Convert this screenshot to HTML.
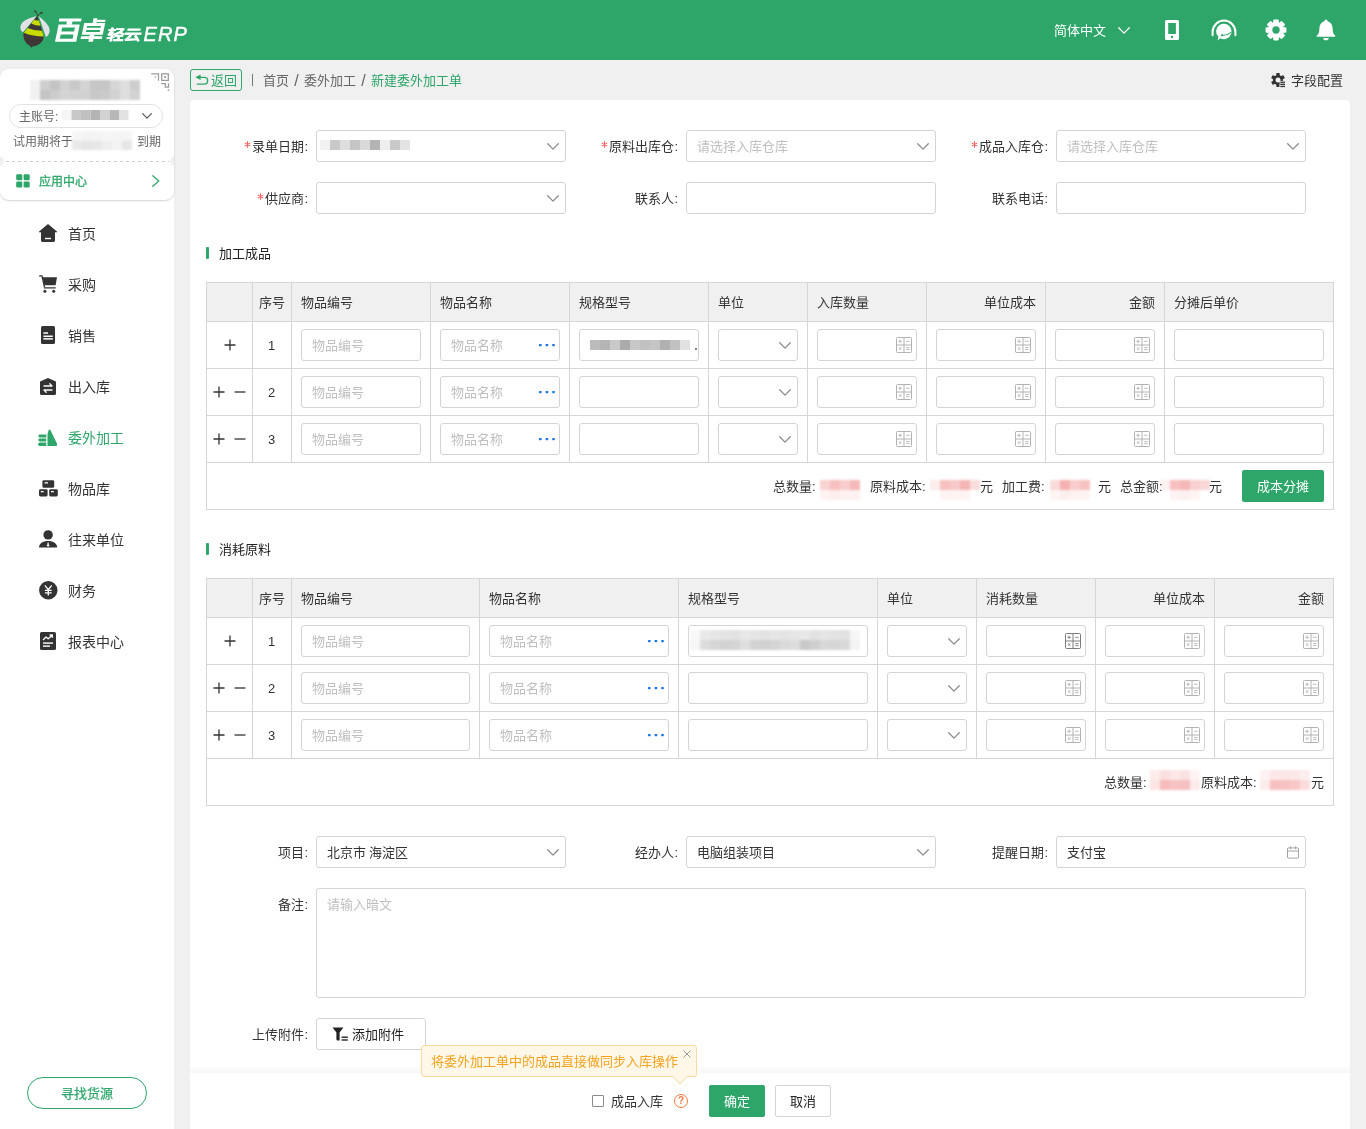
<!DOCTYPE html>
<html lang="zh-CN">
<head>
<meta charset="utf-8">
<title>新建委外加工单</title>
<style>
*{box-sizing:border-box;margin:0;padding:0}
html,body{width:1366px;height:1129px;overflow:hidden}
body{position:relative;will-change:transform;background:#f0f0f0;font-family:"Liberation Sans",sans-serif;font-size:13px;color:#333;line-height:1}
.abs{position:absolute}
svg{display:block;position:absolute;overflow:visible}
/* header */
#hdr{position:absolute;left:0;top:0;width:1366px;height:60px;background:#2ea66a}
#hdr .lang{position:absolute;left:1054px;top:22px;font-size:13px;line-height:18px;color:#fff}
/* sidebar */
#side{position:absolute;left:0;top:69px;width:174px;height:1060px;background:#fff;border-radius:10px 10px 0 0}
#card{position:absolute;left:0;top:0;width:174px;height:131px;overflow:hidden;border-radius:9px;background:#fff;box-shadow:0 1px 2px rgba(0,0,0,.18)}
.notch{position:absolute;width:10px;height:10px;border-radius:50%;background:#f1f1f1;top:87px}
.dash{position:absolute;left:6px;top:92px;width:163px;height:1px;background:repeating-linear-gradient(to right,#cfcfcf 0,#cfcfcf 3px,transparent 3px,transparent 6px)}
.pill{position:absolute;left:9px;top:35px;width:154px;height:24px;border:1px solid #e2e2e2;border-radius:12px;background:#fff}
.pill span{position:absolute;left:9px;top:4px;font-size:12px;line-height:16px;color:#666}
.trial{position:absolute;top:65px;font-size:12px;line-height:16px;color:#666}
.app{position:absolute;left:39px;top:105px;font-size:12px;line-height:16px;color:#2ea66a;-webkit-text-stroke:.3px #2ea66a}
.mi{position:absolute;left:68px;font-size:14px;line-height:20px;color:#333}
.mi.on{color:#2ea66a}
.find{position:absolute;left:27px;top:1008px;width:120px;height:32px;-webkit-text-stroke:.25px #2ea66a;border:1px solid #2ea66a;border-radius:16px;color:#2ea66a;font-size:13px;line-height:32px;text-align:center;background:#fff}

/* main */
#panel{position:absolute;left:190px;top:100px;width:1160px;height:1029px;background:#fff;border-radius:4px 4px 0 0}
.back{position:absolute;left:190px;top:69px;width:52px;height:22px;border:1px solid #2ea66a;border-radius:3px;color:#2ea66a;font-size:13px;line-height:22px;padding-left:20px}
.bc{position:absolute;top:71px;font-size:13px;line-height:18px;color:#666;white-space:nowrap}
.cfg{position:absolute;left:1291px;top:72px;font-size:13px;line-height:18px;color:#333}
.lbl{position:absolute;margin-top:1px;width:102px;text-align:right;font-size:13px;line-height:18px;color:#333;white-space:nowrap}
.lbl svg{position:relative;display:inline-block;vertical-align:top;margin:3px 1px 0 0}
.bc b{font-weight:normal;font-size:16px;padding:0 5.3px;position:relative;top:0.5px}
.inp{position:absolute;height:32px;border:1px solid #d4d4d4;border-radius:3px;background:#fff;font-size:13px;line-height:32px;padding-left:9.5px;color:#333;white-space:nowrap;overflow:hidden}
.ph{color:#bfbfbf}
.sec{position:absolute;margin-top:1px;left:219px;font-size:13px;line-height:18px;color:#222;font-weight:500}
.sec:before{content:"";position:absolute;left:-13px;top:2px;width:3px;height:12px;background:#2ea66a;border-radius:1px}
/* tables */
.tb{position:absolute;left:206px;width:1128px;border:1px solid #d6d6d6;background:#fff}
.tb .h{position:absolute;left:0;top:0;width:1126px;height:38px;background:#f0f0f0;border-bottom:1px solid #d6d6d6}
.vl{position:absolute;top:0;width:1px;height:180px;background:#d6d6d6}
.hl{position:absolute;left:0;width:1126px;height:1px;background:#d6d6d6}
.th{position:absolute;margin-top:1px;font-size:13px;line-height:18px;color:#333;font-weight:500;white-space:nowrap}
.num{position:absolute;margin-top:1px;width:39px;text-align:center;font-size:13px;line-height:18px;color:#333}
.ft{position:absolute;margin-top:1px;font-size:13px;line-height:18px;color:#333;white-space:nowrap}
.btn-g{position:absolute;background:#2ea66a;color:#fff;font-size:13px;border-radius:2px;text-align:center}
.btn-w{position:absolute;background:#fff;color:#222;font-size:13px;border:1px solid #d4d4d4;border-radius:2px;text-align:center}

.lg2{position:absolute;left:105px;top:21px;font-size:17.5px;line-height:24px;font-weight:700;color:#fff;-webkit-text-stroke:.35px #fff;transform-origin:0 100%;transform:skewX(-12deg) scaleY(.82);white-space:nowrap}
.lg3{position:absolute;left:143.5px;top:22px;font-size:20px;line-height:24px;font-style:italic;color:#fff;-webkit-text-stroke:.4px #fff;letter-spacing:1.1px;white-space:nowrap}
</style>
</head>
<body>
<!-- ================= HEADER ================= -->
<div id="hdr">
  <!-- bee logo -->
  <svg style="left:18px;top:8px" width="34" height="42" viewBox="18 8 34 42">
    <path d="M36.9 15.9C30 17.4 23.2 20.4 21.3 24C19.7 27 20.3 30.6 22.9 32.3Z" fill="#e2e1e3"/>
    <path d="M38.7 16.1C43 19.8 48.4 24.4 49.4 28.5C50.2 32 48.6 35.9 45.9 37.1Z" fill="#e2e1e3"/>
    <path d="M37.4 15.6L23.6 33C22.8 37.5 24.6 43.2 30.3 46.1L31.1 47.9L32.5 46.4C38.6 45.9 43.1 42.6 43.9 36.6Z" fill="#3e3736"/>
    <path d="M34.07 19.8Q36.5 20.7 38.8 20.2L40.5 25.8Q35.5 25.6 31.2 23.4Z" fill="#c7db00"/>
    <path d="M27.57 28Q34.5 31 42.05 30.8L43.8 36.6Q33 36.5 23.76 32.8Z" fill="#c7db00"/>
    <path d="M37.7 15.6C37.5 14 36.9 12.9 35.9 12" stroke="#3e3736" stroke-width=".9" fill="none" stroke-linecap="round"/>
    <path d="M38.4 15.4C38.8 14.2 39.6 13.5 40.6 13.1" stroke="#3e3736" stroke-width=".9" fill="none" stroke-linecap="round"/>
    <ellipse cx="35.4" cy="11.4" rx="1.35" ry=".85" transform="rotate(42 35.4 11.4)" fill="#3e3736"/>
    <ellipse cx="41.6" cy="12.8" rx="1.45" ry=".85" transform="rotate(-12 41.6 12.8)" fill="#3e3736"/>
  </svg>
  <svg style="left:50px;top:14px" width="60" height="30" viewBox="0 0 60 30"><g transform="matrix(1 0 -0.207 1 5.755 0)" fill="#fff">
    <rect x="4.5" y="4.5" width="22.3" height="2.9"/><rect x="12.7" y="7" width="5.6" height="3.8"/>
    <path fill-rule="evenodd" d="M5 10.4H26.2V27.8H5ZM9.2 13.4V17.6H22V13.4ZM9.2 20.6V24.8H22V20.6Z"/>
    <rect x="38.7" y="4.2" width="3.8" height="5.2"/><rect x="42.3" y="5.8" width="8.7" height="2.2"/>
    <path fill-rule="evenodd" d="M30.3 9.1H51.3V20.8H30.3ZM33.9 12.1V13.8H47.7V12.1ZM33.9 16.1V18H47.7V16.1Z"/>
    <rect x="38.3" y="20.5" width="4.7" height="7.3"/><rect x="30" y="22.3" width="21.2" height="2.7"/>
  </g></svg><div class="lg2">轻云</div><div class="lg3">ERP</div>
  <div class="lang">简体中文</div>
  <svg style="left:1118px;top:27px" width="12" height="7" viewBox="0 0 12 7"><path d="M0.7 0.7L6 6.1L11.3 0.7" fill="none" stroke="#fff" stroke-width="1.3" stroke-linecap="round" stroke-linejoin="round"/></svg>
  <!-- phone -->
  <svg style="left:1165px;top:20px" width="14" height="20" viewBox="0 0 14 20"><path fill-rule="evenodd" fill="#fff" d="M1.6 0H12.4A1.6 1.6 0 0 1 14 1.6V18.4A1.6 1.6 0 0 1 12.4 20H1.6A1.6 1.6 0 0 1 0 18.4V1.6A1.6 1.6 0 0 1 1.6 0ZM3.2 3.1V14.1H10.9V3.1ZM7 15.8A1.25 1.25 0 1 0 7 18.3A1.25 1.25 0 1 0 7 15.8Z"/></svg>
  <!-- headset -->
  <svg style="left:1211px;top:19px" width="26" height="23" viewBox="0 0 26 23">
    <path d="M1.6 16.2 V13 A11.4 11.4 0 0 1 24.4 13 V16.2" fill="none" stroke="#fff" stroke-width="2" stroke-linecap="round"/>
    <path d="M13.1 4.7 A7.7 7.7 0 1 1 9.2 19.2 L6.6 21.6 L7.4 17.7 A7.7 7.7 0 0 1 13.1 4.7Z" fill="#fff"/>
    <path d="M10.6 16.2 C13.5 16.6 17 15.6 19.6 13.6" fill="none" stroke="#2ea66a" stroke-width="1.1" stroke-linecap="round"/>
    <circle cx="11" cy="16.3" r="1.1" fill="#2ea66a"/>
  </svg>
  <!-- gear -->
  <svg style="left:1265px;top:19px" width="22" height="22" viewBox="-11 -11 22 22"><g fill="#fff">
    <circle r="8"/>
    <rect x="-2.8" y="-10.4" width="5.6" height="4.6" rx="1.1" transform="rotate(0)"/><rect x="-2.8" y="-10.4" width="5.6" height="4.6" rx="1.1" transform="rotate(45)"/><rect x="-2.8" y="-10.4" width="5.6" height="4.6" rx="1.1" transform="rotate(90)"/><rect x="-2.8" y="-10.4" width="5.6" height="4.6" rx="1.1" transform="rotate(135)"/><rect x="-2.8" y="-10.4" width="5.6" height="4.6" rx="1.1" transform="rotate(180)"/><rect x="-2.8" y="-10.4" width="5.6" height="4.6" rx="1.1" transform="rotate(225)"/><rect x="-2.8" y="-10.4" width="5.6" height="4.6" rx="1.1" transform="rotate(270)"/><rect x="-2.8" y="-10.4" width="5.6" height="4.6" rx="1.1" transform="rotate(315)"/></g>
    <circle r="3.7" fill="#2ea66a"/>
  </svg>
  <!-- bell -->
  <svg style="left:1316px;top:19px" width="20" height="22" viewBox="0 0 20 22"><path fill="#fff" d="M10 0.6 A1.6 1.6 0 0 1 11.6 2.2 C15 3.2 16.6 6 16.6 9.6 C16.6 13.6 17.6 15.4 19.2 16.6 V17.8 H0.8 V16.6 C2.4 15.4 3.4 13.6 3.4 9.6 C3.4 6 5 3.2 8.4 2.2 A1.6 1.6 0 0 1 10 0.6Z M7.3 18.9 H12.7 A2.7 2.4 0 0 1 7.3 18.9Z"/></svg>
</div>
<!-- ================= SIDEBAR ================= -->
<div id="side">
  <div id="card">
    <div class="notch" style="left:-6px"></div><div class="notch" style="left:170px"></div>
    <div class="dash"></div>
    <svg style="left:30px;top:11px;filter:blur(0.9px)" width="110" height="20" viewBox="0 0 110 20"><rect x="0" y="0" width="10" height="10" fill="#f1f1f1"/><rect x="10" y="0" width="10" height="10" fill="#cfcfcf"/><rect x="20" y="0" width="10" height="10" fill="#c4c4c4"/><rect x="30" y="0" width="10" height="10" fill="#d2d2d2"/><rect x="40" y="0" width="10" height="10" fill="#c8c8c8"/><rect x="50" y="0" width="10" height="10" fill="#d4d4d4"/><rect x="60" y="0" width="10" height="10" fill="#c6c6c6"/><rect x="70" y="0" width="10" height="10" fill="#c6c6c6"/><rect x="80" y="0" width="10" height="10" fill="#d6d6d6"/><rect x="90" y="0" width="10" height="10" fill="#dedede"/><rect x="100" y="0" width="10" height="10" fill="#cdcdcd"/><rect x="0" y="10" width="10" height="10" fill="#f1f1f1"/><rect x="10" y="10" width="10" height="10" fill="#c4c4c4"/><rect x="20" y="10" width="10" height="10" fill="#cccccc"/><rect x="30" y="10" width="10" height="10" fill="#d4d4d4"/><rect x="40" y="10" width="10" height="10" fill="#d2d2d2"/><rect x="50" y="10" width="10" height="10" fill="#d2d2d2"/><rect x="60" y="10" width="10" height="10" fill="#c8c8c8"/><rect x="70" y="10" width="10" height="10" fill="#cacaca"/><rect x="80" y="10" width="10" height="10" fill="#d2d2d2"/><rect x="90" y="10" width="10" height="10" fill="#dedede"/><rect x="100" y="10" width="10" height="10" fill="#d2d2d2"/></svg>
    <svg style="left:151px;top:4px" width="19" height="19" viewBox="0 0 19 19" fill="none" stroke="#9b9b9b" stroke-width="1.25"><path d="M0.2 0.8H7.5V7.7"/><rect x="3.5" y="3.2" width="1.6" height="1.6" fill="#b5b5b5" stroke="none"/><rect x="10.7" y="0.8" width="6.6" height="6.6"/><rect x="13.1" y="3.2" width="1.8" height="1.8" fill="#9b9b9b" stroke="none"/><path d="M10.2 10.5H14.3V14H17.5V10.2"/><rect x="16.7" y="16.4" width="1.5" height="1.5" fill="#9b9b9b" stroke="none"/></svg>
    <div class="pill"><span>主账号:</span></div>
    <svg style="left:62px;top:41px;filter:blur(0.5px)" width="66.5" height="10" viewBox="0 0 66.5 10"><rect x="0.0" y="0" width="9.5" height="10" fill="#f5f5f5"/><rect x="9.5" y="0" width="9.5" height="10" fill="#c8c8c8"/><rect x="19.0" y="0" width="9.5" height="10" fill="#c0c0c0"/><rect x="28.5" y="0" width="9.5" height="10" fill="#b4b4b4"/><rect x="38.0" y="0" width="9.5" height="10" fill="#d2d2d2"/><rect x="47.5" y="0" width="9.5" height="10" fill="#b8b8b8"/><rect x="57.0" y="0" width="9.5" height="10" fill="#e2e2e2"/></svg>
    <svg style="left:142px;top:44px" width="10" height="6" viewBox="0 0 10 6"><path d="M0.6 0.6L5 5.2L9.4 0.6" fill="none" stroke="#555" stroke-width="1.2" stroke-linecap="round" stroke-linejoin="round"/></svg>
    <div class="trial" style="left:13px">试用期将于</div>
    <div class="trial" style="left:137px">到期</div>
    <svg style="left:72px;top:62px;filter:blur(1px)" width="60" height="19.0" viewBox="0 0 60 19.0"><rect x="0" y="0.0" width="10" height="9.5" fill="#f6f6f6"/><rect x="10" y="0.0" width="10" height="9.5" fill="#f3f3f3"/><rect x="20" y="0.0" width="10" height="9.5" fill="#f4f4f4"/><rect x="30" y="0.0" width="10" height="9.5" fill="#f6f6f6"/><rect x="40" y="0.0" width="10" height="9.5" fill="#f4f4f4"/><rect x="50" y="0.0" width="10" height="9.5" fill="#f5f5f5"/><rect x="0" y="9.5" width="10" height="9.5" fill="#e9e9e9"/><rect x="10" y="9.5" width="10" height="9.5" fill="#e5e5e5"/><rect x="20" y="9.5" width="10" height="9.5" fill="#e7e7e7"/><rect x="30" y="9.5" width="10" height="9.5" fill="#efefef"/><rect x="40" y="9.5" width="10" height="9.5" fill="#f3f3f3"/><rect x="50" y="9.5" width="10" height="9.5" fill="#e6e6e6"/></svg>
    <svg style="left:16px;top:105px" width="14" height="14" viewBox="0 0 14 14" fill="#2ea66a"><rect x="0.2" y="0.2" width="6.1" height="6.1" rx="1.3"/><rect x="7.6" y="0.2" width="6.1" height="6.1" rx="1.3"/><rect x="0.2" y="7.5" width="6.1" height="6.1" rx="1.3"/><rect x="7.6" y="7.5" width="6.1" height="6.1" rx="1.3"/></svg>
    <div class="app">应用中心</div>
    <svg style="left:152px;top:106px" width="8" height="12" viewBox="0 0 8 12"><path d="M0.8 0.7L6.8 6L0.8 11.3" fill="none" stroke="#2ea66a" stroke-width="1.3" stroke-linecap="round" stroke-linejoin="round"/></svg>
  </div>
  <!-- menu icons -->
  <svg style="left:39px;top:155px" width="18" height="18" viewBox="0 0 18 18"><path fill="#333" d="M9 0L18 7.6V8.2H16V16.6A1.4 1.4 0 0 1 14.6 18H3.4A1.4 1.4 0 0 1 2 16.6V8.2H0V7.6Z"/><rect x="6" y="13.8" width="6" height="1.4" fill="#fff"/></svg>
  <svg style="left:39px;top:206px" width="18" height="18" viewBox="0 0 18 18"><path fill="none" stroke="#333" stroke-width="1.4" stroke-linecap="round" stroke-linejoin="round" d="M0.7 0.9H3L5.4 11.6"/><path fill="#333" d="M3.6 2.2H18L16.6 10.2H5.4Z"/><path fill="none" stroke="#333" stroke-width="1.4" stroke-linecap="round" d="M5.4 12.9H16.2"/><circle cx="5.9" cy="16.3" r="1.5" fill="#333"/><circle cx="14.7" cy="16.3" r="1.5" fill="#333"/></svg>
  <svg style="left:41px;top:257px" width="14" height="18" viewBox="0 0 14 18"><rect width="14" height="18" rx="1.6" fill="#333"/><rect x="2.4" y="6.3" width="4.6" height="1.5" fill="#fff"/><rect x="2.4" y="9.5" width="9.4" height="1.5" fill="#fff"/><rect x="2.4" y="12.1" width="9.4" height="1.5" fill="#fff"/></svg>
  <svg style="left:40px;top:309px" width="16" height="17" viewBox="0 0 16 17"><path fill="#333" d="M8 0L15.4 3.2A1 1 0 0 1 16 4.1V15.4A1.6 1.6 0 0 1 14.4 17H1.6A1.6 1.6 0 0 1 0 15.4V4.1A1 1 0 0 1 0.6 3.2Z"/><path fill="none" stroke="#fff" stroke-width="1.3" stroke-linejoin="round" stroke-linecap="round" d="M4 8H12L9.8 5.8M12 12H4L6.2 14.2"/></svg>
  <svg style="left:38px;top:360px" width="20" height="18" viewBox="0 0 20 18"><path fill="#2ea66a" d="M1.8 5.6H8.3V8.4H1.8A1.4 1.4 0 0 1 1.8 5.6ZM1.8 9.5H8.3V12.4H1.8A1.4 1.4 0 0 1 1.8 9.5ZM1.8 13.5H8.3V17H1.8A1.75 1.75 0 0 1 1.8 13.5Z"/><path fill="#2ea66a" d="M9.5 17V5L10.6 1.2C10.9 0.3 11.9 0.3 12.4 1.1L18.9 14.4C19.6 15.8 18.9 17 17.4 17Z"/></svg>
  <svg style="left:39px;top:411px" width="19" height="17" viewBox="0 0 19 17"><rect x="3.4" y="0.2" width="11.8" height="7.6" rx="1.4" fill="#333"/><rect x="0" y="9.2" width="8.6" height="7.2" rx="1.4" fill="#333"/><rect x="10.2" y="9.2" width="8.6" height="7.2" rx="1.4" fill="#333"/><rect x="5.6" y="2.2" width="3.4" height="1.3" fill="#fff"/><rect x="1.8" y="11" width="2.8" height="1.3" fill="#fff"/><rect x="12" y="11" width="2.8" height="1.3" fill="#fff"/></svg>
  <svg style="left:39px;top:461px" width="18" height="18" viewBox="0 0 18 18"><circle cx="9.1" cy="4.9" r="4.7" fill="#333"/><path fill="#333" d="M0 17.6C0.2 13.4 3.6 11 9.1 11C14.6 11 18 13.4 18.2 17.6Z"/><path fill="#fff" d="M8.4 12.4H9.8L9.6 14.2L10.6 15.6L9.1 16.8L7.6 15.6L8.6 14.2Z"/></svg>
  <svg style="left:39px;top:512px" width="19" height="19" viewBox="0 0 19 19"><circle cx="9.3" cy="9.2" r="9.2" fill="#333"/><path fill="none" stroke="#fff" stroke-width="1.3" d="M5.9 4.4L9.3 8.6L12.7 4.4M9.3 8.6V14.4M5.9 9.3H12.7M5.9 11.8H12.7"/></svg>
  <svg style="left:40px;top:563px" width="16" height="18" viewBox="0 0 16 18"><rect width="16" height="18" rx="1.6" fill="#333"/><path fill="none" stroke="#fff" stroke-width="1.3" stroke-linejoin="round" d="M3 8L6 5L8.2 6.8L12.2 3.2M9.6 3H12.4V5.8"/><rect x="3" y="10.4" width="10" height="1.4" fill="#fff"/><rect x="3" y="13.4" width="7" height="1.4" fill="#fff"/></svg>
  <div class="mi" style="top:155px">首页</div>
  <div class="mi" style="top:206px">采购</div>
  <div class="mi" style="top:257px">销售</div>
  <div class="mi" style="top:308px">出入库</div>
  <div class="mi on" style="top:359px">委外加工</div>
  <div class="mi" style="top:410px">物品库</div>
  <div class="mi" style="top:461px">往来单位</div>
  <div class="mi" style="top:512px">财务</div>
  <div class="mi" style="top:563px">报表中心</div>
  <div class="find">寻找货源</div>
</div>
<!-- ================= MAIN ================= -->
<div id="panel"></div>
<div class="back">返回</div>
<svg style="left:195px;top:74px" width="14" height="12" viewBox="0 0 14 12"><path d="M5.6 0.6L0.3 3.3L5.6 6Z" fill="#2ea66a"/><path d="M4.6 3.4H9.3A3.35 3.35 0 0 1 9.3 10.1H2.2" fill="none" stroke="#2ea66a" stroke-width="1.35" stroke-linecap="round"/></svg>
<div class="abs" style="left:252px;top:74px;width:1px;height:12px;background:#777"></div>
<div class="bc" style="left:263px">首页<b>/</b>委外加工<b>/</b><span style="color:#2ea66a">新建委外加工单</span></div>
<svg style="left:1271px;top:73px" width="14" height="14" viewBox="-7 -7 14 14"><g fill="#333"><circle r="5.1"/><rect x="-1.7" y="-7" width="3.4" height="3.4" rx=".5" transform="rotate(0)"/><rect x="-1.7" y="-7" width="3.4" height="3.4" rx=".5" transform="rotate(60)"/><rect x="-1.7" y="-7" width="3.4" height="3.4" rx=".5" transform="rotate(120)"/><rect x="-1.7" y="-7" width="3.4" height="3.4" rx=".5" transform="rotate(180)"/><rect x="-1.7" y="-7" width="3.4" height="3.4" rx=".5" transform="rotate(240)"/><rect x="-1.7" y="-7" width="3.4" height="3.4" rx=".5" transform="rotate(300)"/></g><circle r="2.5" fill="#f0f0f0"/><rect x="1.6" y="0.9" width="6" height="6.4" fill="#f0f0f0"/><g fill="#333"><rect x="2.3" y="1.6" width="4.7" height="1.3"/><rect x="2.3" y="3.7" width="4.7" height="1.3"/><rect x="2.3" y="5.8" width="4.7" height="1.3"/></g></svg>
<div class="cfg">字段配置</div>
<div class="lbl" style="left:206px;top:137px"><svg width="7" height="7" viewBox="0 0 7 7"><path d="M3.5 0.3V6.7M0.7 1.9L6.3 5.1M6.3 1.9L0.7 5.1" stroke="#ff5c5c" stroke-width="1.05" fill="none"/></svg>录单日期:</div>
<div class="inp" style="left:316px;top:130px;width:250px;height:32px"></div>
<svg style="left:547px;top:143px" width="12" height="7" viewBox="0 0 12 7"><path d="M0.7 0.7 L6.0 6.1 L11.3 0.7" fill="none" stroke="#8c8c8c" stroke-width="1.3" stroke-linecap="round" stroke-linejoin="round"/></svg>
<div class="lbl" style="left:576px;top:137px"><svg width="7" height="7" viewBox="0 0 7 7"><path d="M3.5 0.3V6.7M0.7 1.9L6.3 5.1M6.3 1.9L0.7 5.1" stroke="#ff5c5c" stroke-width="1.05" fill="none"/></svg>原料出库仓:</div>
<div class="inp ph" style="left:686px;top:130px;width:250px;height:32px">请选择入库仓库</div>
<svg style="left:917px;top:143px" width="12" height="7" viewBox="0 0 12 7"><path d="M0.7 0.7 L6.0 6.1 L11.3 0.7" fill="none" stroke="#8c8c8c" stroke-width="1.3" stroke-linecap="round" stroke-linejoin="round"/></svg>
<div class="lbl" style="left:946px;top:137px"><svg width="7" height="7" viewBox="0 0 7 7"><path d="M3.5 0.3V6.7M0.7 1.9L6.3 5.1M6.3 1.9L0.7 5.1" stroke="#ff5c5c" stroke-width="1.05" fill="none"/></svg>成品入库仓:</div>
<div class="inp ph" style="left:1056px;top:130px;width:250px;height:32px">请选择入库仓库</div>
<svg style="left:1287px;top:143px" width="12" height="7" viewBox="0 0 12 7"><path d="M0.7 0.7 L6.0 6.1 L11.3 0.7" fill="none" stroke="#8c8c8c" stroke-width="1.3" stroke-linecap="round" stroke-linejoin="round"/></svg>
<div class="lbl" style="left:206px;top:189px"><svg width="7" height="7" viewBox="0 0 7 7"><path d="M3.5 0.3V6.7M0.7 1.9L6.3 5.1M6.3 1.9L0.7 5.1" stroke="#ff5c5c" stroke-width="1.05" fill="none"/></svg>供应商:</div>
<div class="inp" style="left:316px;top:182px;width:250px;height:32px"></div>
<svg style="left:547px;top:195px" width="12" height="7" viewBox="0 0 12 7"><path d="M0.7 0.7 L6.0 6.1 L11.3 0.7" fill="none" stroke="#8c8c8c" stroke-width="1.3" stroke-linecap="round" stroke-linejoin="round"/></svg>
<div class="lbl" style="left:576px;top:189px">联系人:</div>
<div class="inp" style="left:686px;top:182px;width:250px;height:32px"></div>
<div class="lbl" style="left:946px;top:189px">联系电话:</div>
<div class="inp" style="left:1056px;top:182px;width:250px;height:32px"></div>
<svg style="left:320px;top:140px;filter:blur(0.6px)" width="90" height="10" viewBox="0 0 90 10"><rect x="0" y="0" width="10" height="10" fill="#f1f1f1"/><rect x="10" y="0" width="10" height="10" fill="#c9c9c9"/><rect x="20" y="0" width="10" height="10" fill="#dedede"/><rect x="30" y="0" width="10" height="10" fill="#c5c5c5"/><rect x="40" y="0" width="10" height="10" fill="#d9d9d9"/><rect x="50" y="0" width="10" height="10" fill="#b4b4b4"/><rect x="60" y="0" width="10" height="10" fill="#eeeeee"/><rect x="70" y="0" width="10" height="10" fill="#c9c9c9"/><rect x="80" y="0" width="10" height="10" fill="#e3e3e3"/></svg>
<div class="sec" style="top:244px">加工成品</div>
<div class="abs" style="left:206px;top:282px;width:1128px;height:228px;background:#fff;border:1px solid #d6d6d6"></div>
<div class="abs" style="left:207px;top:283px;width:1126px;height:38px;background:#f0f0f0"></div>
<div class="abs" style="left:206px;top:321px;width:1128px;height:1px;background:#d6d6d6"></div>
<div class="abs" style="left:206px;top:368px;width:1128px;height:1px;background:#d6d6d6"></div>
<div class="abs" style="left:206px;top:415px;width:1128px;height:1px;background:#d6d6d6"></div>
<div class="abs" style="left:206px;top:462px;width:1128px;height:1px;background:#d6d6d6"></div>
<div class="abs" style="left:252px;top:282px;width:1px;height:180px;background:#d6d6d6"></div>
<div class="abs" style="left:291px;top:282px;width:1px;height:180px;background:#d6d6d6"></div>
<div class="abs" style="left:430px;top:282px;width:1px;height:180px;background:#d6d6d6"></div>
<div class="abs" style="left:569px;top:282px;width:1px;height:180px;background:#d6d6d6"></div>
<div class="abs" style="left:708px;top:282px;width:1px;height:180px;background:#d6d6d6"></div>
<div class="abs" style="left:807px;top:282px;width:1px;height:180px;background:#d6d6d6"></div>
<div class="abs" style="left:926px;top:282px;width:1px;height:180px;background:#d6d6d6"></div>
<div class="abs" style="left:1045px;top:282px;width:1px;height:180px;background:#d6d6d6"></div>
<div class="abs" style="left:1164px;top:282px;width:1px;height:180px;background:#d6d6d6"></div>
<div class="th" style="top:293px;left:253px;width:38px;text-align:center">序号</div>
<div class="th" style="top:293px;left:301px">物品编号</div>
<div class="th" style="top:293px;left:440px">物品名称</div>
<div class="th" style="top:293px;left:579px">规格型号</div>
<div class="th" style="top:293px;left:718px">单位</div>
<div class="th" style="top:293px;left:817px">入库数量</div>
<div class="th" style="top:293px;left:927px;width:109px;text-align:right">单位成本</div>
<div class="th" style="top:293px;left:1046px;width:109px;text-align:right">金额</div>
<div class="th" style="top:293px;left:1174px">分摊后单价</div>
<svg style="left:224px;top:338.5px" width="12" height="12" viewBox="0 0 12 12"><path d="M6 0.5V11.5M0.5 6H11.5" stroke="#333" stroke-width="1.3" fill="none"/></svg>
<div class="num" style="left:252px;top:336px">1</div>
<div class="inp ph" style="left:301px;top:329px;width:120px;height:32px">物品编号</div>
<div class="inp ph" style="left:440px;top:329px;width:120px;height:32px">物品名称</div>
<svg style="left:539px;top:342.5px" width="17" height="4" viewBox="0 0 17 4" fill="#1a73e8"><rect x="0" y="1" width="2.6" height="2.2" rx=".6"/><rect x="6.6" y="1" width="2.6" height="2.2" rx=".6"/><rect x="13.2" y="1" width="2.6" height="2.2" rx=".6"/></svg>
<div class="inp" style="left:579px;top:329px;width:120px;height:32px"></div>
<div class="inp" style="left:718px;top:329px;width:80px;height:32px"></div>
<svg style="left:779px;top:342px" width="12" height="7" viewBox="0 0 12 7"><path d="M0.7 0.7 L6.0 6.1 L11.3 0.7" fill="none" stroke="#8c8c8c" stroke-width="1.3" stroke-linecap="round" stroke-linejoin="round"/></svg>
<div class="inp" style="left:817px;top:329px;width:100px;height:32px"></div>
<svg style="left:896px;top:337px" width="16" height="16" viewBox="0 0 16 16" fill="none" stroke="#b2b2b2" stroke-width="1"><rect x="0.5" y="0.5" width="15" height="15" rx="1"/><path d="M8 0.5V15.5M0.5 8H15.5"/><path d="M2.4 4.3H5.8M4.1 2.6V6M10.2 4.3H13.6M2.9 10.3L5.5 12.9M5.5 10.3L2.9 12.9M10.2 10.6H13.6M10.2 12.6H13.6" stroke-width="0.9"/></svg>
<div class="inp" style="left:936px;top:329px;width:100px;height:32px"></div>
<svg style="left:1015px;top:337px" width="16" height="16" viewBox="0 0 16 16" fill="none" stroke="#b2b2b2" stroke-width="1"><rect x="0.5" y="0.5" width="15" height="15" rx="1"/><path d="M8 0.5V15.5M0.5 8H15.5"/><path d="M2.4 4.3H5.8M4.1 2.6V6M10.2 4.3H13.6M2.9 10.3L5.5 12.9M5.5 10.3L2.9 12.9M10.2 10.6H13.6M10.2 12.6H13.6" stroke-width="0.9"/></svg>
<div class="inp" style="left:1055px;top:329px;width:100px;height:32px"></div>
<svg style="left:1134px;top:337px" width="16" height="16" viewBox="0 0 16 16" fill="none" stroke="#b2b2b2" stroke-width="1"><rect x="0.5" y="0.5" width="15" height="15" rx="1"/><path d="M8 0.5V15.5M0.5 8H15.5"/><path d="M2.4 4.3H5.8M4.1 2.6V6M10.2 4.3H13.6M2.9 10.3L5.5 12.9M5.5 10.3L2.9 12.9M10.2 10.6H13.6M10.2 12.6H13.6" stroke-width="0.9"/></svg>
<div class="inp" style="left:1174px;top:329px;width:150px;height:32px"></div>
<svg style="left:213px;top:385.5px" width="12" height="12" viewBox="0 0 12 12"><path d="M6 0.5V11.5M0.5 6H11.5" stroke="#333" stroke-width="1.3" fill="none"/></svg>
<svg style="left:234px;top:385.5px" width="12" height="12" viewBox="0 0 12 12"><path d="M0.5 6H11.5" stroke="#333" stroke-width="1.3" fill="none"/></svg>
<div class="num" style="left:252px;top:383px">2</div>
<div class="inp ph" style="left:301px;top:376px;width:120px;height:32px">物品编号</div>
<div class="inp ph" style="left:440px;top:376px;width:120px;height:32px">物品名称</div>
<svg style="left:539px;top:389.5px" width="17" height="4" viewBox="0 0 17 4" fill="#1a73e8"><rect x="0" y="1" width="2.6" height="2.2" rx=".6"/><rect x="6.6" y="1" width="2.6" height="2.2" rx=".6"/><rect x="13.2" y="1" width="2.6" height="2.2" rx=".6"/></svg>
<div class="inp" style="left:579px;top:376px;width:120px;height:32px"></div>
<div class="inp" style="left:718px;top:376px;width:80px;height:32px"></div>
<svg style="left:779px;top:389px" width="12" height="7" viewBox="0 0 12 7"><path d="M0.7 0.7 L6.0 6.1 L11.3 0.7" fill="none" stroke="#8c8c8c" stroke-width="1.3" stroke-linecap="round" stroke-linejoin="round"/></svg>
<div class="inp" style="left:817px;top:376px;width:100px;height:32px"></div>
<svg style="left:896px;top:384px" width="16" height="16" viewBox="0 0 16 16" fill="none" stroke="#b2b2b2" stroke-width="1"><rect x="0.5" y="0.5" width="15" height="15" rx="1"/><path d="M8 0.5V15.5M0.5 8H15.5"/><path d="M2.4 4.3H5.8M4.1 2.6V6M10.2 4.3H13.6M2.9 10.3L5.5 12.9M5.5 10.3L2.9 12.9M10.2 10.6H13.6M10.2 12.6H13.6" stroke-width="0.9"/></svg>
<div class="inp" style="left:936px;top:376px;width:100px;height:32px"></div>
<svg style="left:1015px;top:384px" width="16" height="16" viewBox="0 0 16 16" fill="none" stroke="#b2b2b2" stroke-width="1"><rect x="0.5" y="0.5" width="15" height="15" rx="1"/><path d="M8 0.5V15.5M0.5 8H15.5"/><path d="M2.4 4.3H5.8M4.1 2.6V6M10.2 4.3H13.6M2.9 10.3L5.5 12.9M5.5 10.3L2.9 12.9M10.2 10.6H13.6M10.2 12.6H13.6" stroke-width="0.9"/></svg>
<div class="inp" style="left:1055px;top:376px;width:100px;height:32px"></div>
<svg style="left:1134px;top:384px" width="16" height="16" viewBox="0 0 16 16" fill="none" stroke="#b2b2b2" stroke-width="1"><rect x="0.5" y="0.5" width="15" height="15" rx="1"/><path d="M8 0.5V15.5M0.5 8H15.5"/><path d="M2.4 4.3H5.8M4.1 2.6V6M10.2 4.3H13.6M2.9 10.3L5.5 12.9M5.5 10.3L2.9 12.9M10.2 10.6H13.6M10.2 12.6H13.6" stroke-width="0.9"/></svg>
<div class="inp" style="left:1174px;top:376px;width:150px;height:32px"></div>
<svg style="left:213px;top:432.5px" width="12" height="12" viewBox="0 0 12 12"><path d="M6 0.5V11.5M0.5 6H11.5" stroke="#333" stroke-width="1.3" fill="none"/></svg>
<svg style="left:234px;top:432.5px" width="12" height="12" viewBox="0 0 12 12"><path d="M0.5 6H11.5" stroke="#333" stroke-width="1.3" fill="none"/></svg>
<div class="num" style="left:252px;top:430px">3</div>
<div class="inp ph" style="left:301px;top:423px;width:120px;height:32px">物品编号</div>
<div class="inp ph" style="left:440px;top:423px;width:120px;height:32px">物品名称</div>
<svg style="left:539px;top:436.5px" width="17" height="4" viewBox="0 0 17 4" fill="#1a73e8"><rect x="0" y="1" width="2.6" height="2.2" rx=".6"/><rect x="6.6" y="1" width="2.6" height="2.2" rx=".6"/><rect x="13.2" y="1" width="2.6" height="2.2" rx=".6"/></svg>
<div class="inp" style="left:579px;top:423px;width:120px;height:32px"></div>
<div class="inp" style="left:718px;top:423px;width:80px;height:32px"></div>
<svg style="left:779px;top:436px" width="12" height="7" viewBox="0 0 12 7"><path d="M0.7 0.7 L6.0 6.1 L11.3 0.7" fill="none" stroke="#8c8c8c" stroke-width="1.3" stroke-linecap="round" stroke-linejoin="round"/></svg>
<div class="inp" style="left:817px;top:423px;width:100px;height:32px"></div>
<svg style="left:896px;top:431px" width="16" height="16" viewBox="0 0 16 16" fill="none" stroke="#b2b2b2" stroke-width="1"><rect x="0.5" y="0.5" width="15" height="15" rx="1"/><path d="M8 0.5V15.5M0.5 8H15.5"/><path d="M2.4 4.3H5.8M4.1 2.6V6M10.2 4.3H13.6M2.9 10.3L5.5 12.9M5.5 10.3L2.9 12.9M10.2 10.6H13.6M10.2 12.6H13.6" stroke-width="0.9"/></svg>
<div class="inp" style="left:936px;top:423px;width:100px;height:32px"></div>
<svg style="left:1015px;top:431px" width="16" height="16" viewBox="0 0 16 16" fill="none" stroke="#b2b2b2" stroke-width="1"><rect x="0.5" y="0.5" width="15" height="15" rx="1"/><path d="M8 0.5V15.5M0.5 8H15.5"/><path d="M2.4 4.3H5.8M4.1 2.6V6M10.2 4.3H13.6M2.9 10.3L5.5 12.9M5.5 10.3L2.9 12.9M10.2 10.6H13.6M10.2 12.6H13.6" stroke-width="0.9"/></svg>
<div class="inp" style="left:1055px;top:423px;width:100px;height:32px"></div>
<svg style="left:1134px;top:431px" width="16" height="16" viewBox="0 0 16 16" fill="none" stroke="#b2b2b2" stroke-width="1"><rect x="0.5" y="0.5" width="15" height="15" rx="1"/><path d="M8 0.5V15.5M0.5 8H15.5"/><path d="M2.4 4.3H5.8M4.1 2.6V6M10.2 4.3H13.6M2.9 10.3L5.5 12.9M5.5 10.3L2.9 12.9M10.2 10.6H13.6M10.2 12.6H13.6" stroke-width="0.9"/></svg>
<div class="inp" style="left:1174px;top:423px;width:150px;height:32px"></div>
<svg style="left:820px;top:480px;filter:blur(0.9px)" width="40" height="20" viewBox="0 0 40 20"><rect x="0" y="0" width="10" height="10" fill="#f9d2d2"/><rect x="10" y="0" width="10" height="10" fill="#f7bfbf"/><rect x="20" y="0" width="10" height="10" fill="#f9cdcd"/><rect x="30" y="0" width="10" height="10" fill="#f6b9b9"/><rect x="0" y="10" width="10" height="10" fill="#fef3f3"/><rect x="10" y="10" width="10" height="10" fill="#fdeeee"/><rect x="20" y="10" width="10" height="10" fill="#fef1f1"/><rect x="30" y="10" width="10" height="10" fill="#fdf0f0"/></svg>
<svg style="left:930px;top:480px;filter:blur(0.9px)" width="50" height="20" viewBox="0 0 50 20"><rect x="0" y="0" width="10" height="10" fill="#fdecec"/><rect x="10" y="0" width="10" height="10" fill="#f7c1c1"/><rect x="20" y="0" width="10" height="10" fill="#f8c9c9"/><rect x="30" y="0" width="10" height="10" fill="#f5b5b5"/><rect x="40" y="0" width="10" height="10" fill="#fbdcdc"/><rect x="0" y="10" width="10" height="10" fill="#ffffff"/><rect x="10" y="10" width="10" height="10" fill="#fef3f3"/><rect x="20" y="10" width="10" height="10" fill="#fef2f2"/><rect x="30" y="10" width="10" height="10" fill="#fef4f4"/><rect x="40" y="10" width="10" height="10" fill="#ffffff"/></svg>
<svg style="left:1050px;top:480px;filter:blur(0.9px)" width="40" height="20" viewBox="0 0 40 20"><rect x="0" y="0" width="10" height="10" fill="#fadbdb"/><rect x="10" y="0" width="10" height="10" fill="#f5b1b1"/><rect x="20" y="0" width="10" height="10" fill="#f9cdcd"/><rect x="30" y="0" width="10" height="10" fill="#f7c1c1"/><rect x="0" y="10" width="10" height="10" fill="#fef4f4"/><rect x="10" y="10" width="10" height="10" fill="#fdeeee"/><rect x="20" y="10" width="10" height="10" fill="#fef2f2"/><rect x="30" y="10" width="10" height="10" fill="#fef3f3"/></svg>
<svg style="left:1160px;top:480px;filter:blur(0.9px)" width="50" height="20" viewBox="0 0 50 20"><rect x="0" y="0" width="10" height="10" fill="#fcf0f0"/><rect x="10" y="0" width="10" height="10" fill="#f7c1c1"/><rect x="20" y="0" width="10" height="10" fill="#f5b7b7"/><rect x="30" y="0" width="10" height="10" fill="#f9d1d1"/><rect x="40" y="0" width="10" height="10" fill="#fad8d8"/><rect x="0" y="10" width="10" height="10" fill="#ffffff"/><rect x="10" y="10" width="10" height="10" fill="#fef3f3"/><rect x="20" y="10" width="10" height="10" fill="#fdf0f0"/><rect x="30" y="10" width="10" height="10" fill="#fef4f4"/><rect x="40" y="10" width="10" height="10" fill="#ffffff"/></svg>
<div class="ft" style="left:773px;top:477px">总数量:</div>
<div class="ft" style="left:870px;top:477px">原料成本:</div>
<div class="ft" style="left:980px;top:477px">元</div>
<div class="ft" style="left:1002px;top:477px">加工费:</div>
<div class="ft" style="left:1098px;top:477px">元</div>
<div class="ft" style="left:1120px;top:477px">总金额:</div>
<div class="ft" style="left:1209px;top:477px">元</div>
<div class="btn-g" style="left:1242px;top:470px;width:82px;height:32px;line-height:34px">成本分摊</div>
<svg style="left:590px;top:340px;filter:blur(0.4px)" width="100" height="10" viewBox="0 0 100 10"><rect x="0" y="0" width="10" height="10" fill="#bcbcbc"/><rect x="10" y="0" width="10" height="10" fill="#b5b5b5"/><rect x="20" y="0" width="10" height="10" fill="#c9c9c9"/><rect x="30" y="0" width="10" height="10" fill="#ababab"/><rect x="40" y="0" width="10" height="10" fill="#c8c8c8"/><rect x="50" y="0" width="10" height="10" fill="#c1c1c1"/><rect x="60" y="0" width="10" height="10" fill="#c5c5c5"/><rect x="70" y="0" width="10" height="10" fill="#b1b1b1"/><rect x="80" y="0" width="10" height="10" fill="#c1c1c1"/><rect x="90" y="0" width="10" height="10" fill="#e1e1e1"/></svg>
<div class="abs" style="left:695px;top:348px;width:2px;height:2px;background:#555;border-radius:1px"></div>
<div class="sec" style="top:540px">消耗原料</div>
<div class="abs" style="left:206px;top:578px;width:1128px;height:228px;background:#fff;border:1px solid #d6d6d6"></div>
<div class="abs" style="left:207px;top:579px;width:1126px;height:38px;background:#f0f0f0"></div>
<div class="abs" style="left:206px;top:617px;width:1128px;height:1px;background:#d6d6d6"></div>
<div class="abs" style="left:206px;top:664px;width:1128px;height:1px;background:#d6d6d6"></div>
<div class="abs" style="left:206px;top:711px;width:1128px;height:1px;background:#d6d6d6"></div>
<div class="abs" style="left:206px;top:758px;width:1128px;height:1px;background:#d6d6d6"></div>
<div class="abs" style="left:252px;top:578px;width:1px;height:180px;background:#d6d6d6"></div>
<div class="abs" style="left:291px;top:578px;width:1px;height:180px;background:#d6d6d6"></div>
<div class="abs" style="left:479px;top:578px;width:1px;height:180px;background:#d6d6d6"></div>
<div class="abs" style="left:678px;top:578px;width:1px;height:180px;background:#d6d6d6"></div>
<div class="abs" style="left:877px;top:578px;width:1px;height:180px;background:#d6d6d6"></div>
<div class="abs" style="left:976px;top:578px;width:1px;height:180px;background:#d6d6d6"></div>
<div class="abs" style="left:1095px;top:578px;width:1px;height:180px;background:#d6d6d6"></div>
<div class="abs" style="left:1214px;top:578px;width:1px;height:180px;background:#d6d6d6"></div>
<div class="th" style="top:589px;left:253px;width:38px;text-align:center">序号</div>
<div class="th" style="top:589px;left:301px">物品编号</div>
<div class="th" style="top:589px;left:489px">物品名称</div>
<div class="th" style="top:589px;left:688px">规格型号</div>
<div class="th" style="top:589px;left:887px">单位</div>
<div class="th" style="top:589px;left:986px">消耗数量</div>
<div class="th" style="top:589px;left:1096px;width:109px;text-align:right">单位成本</div>
<div class="th" style="top:589px;left:1215px;width:109px;text-align:right">金额</div>
<svg style="left:224px;top:634.5px" width="12" height="12" viewBox="0 0 12 12"><path d="M6 0.5V11.5M0.5 6H11.5" stroke="#333" stroke-width="1.3" fill="none"/></svg>
<div class="num" style="left:252px;top:632px">1</div>
<div class="inp ph" style="left:301px;top:625px;width:169px;height:32px">物品编号</div>
<div class="inp ph" style="left:489px;top:625px;width:180px;height:32px">物品名称</div>
<svg style="left:648px;top:638.5px" width="17" height="4" viewBox="0 0 17 4" fill="#1a73e8"><rect x="0" y="1" width="2.6" height="2.2" rx=".6"/><rect x="6.6" y="1" width="2.6" height="2.2" rx=".6"/><rect x="13.2" y="1" width="2.6" height="2.2" rx=".6"/></svg>
<div class="inp" style="left:688px;top:625px;width:180px;height:32px"></div>
<div class="inp" style="left:887px;top:625px;width:80px;height:32px"></div>
<svg style="left:948px;top:638px" width="12" height="7" viewBox="0 0 12 7"><path d="M0.7 0.7 L6.0 6.1 L11.3 0.7" fill="none" stroke="#8c8c8c" stroke-width="1.3" stroke-linecap="round" stroke-linejoin="round"/></svg>
<div class="inp" style="left:986px;top:625px;width:100px;height:32px"></div>
<svg style="left:1065px;top:633px" width="16" height="16" viewBox="0 0 16 16" fill="none" stroke="#7d7d7d" stroke-width="1"><rect x="0.5" y="0.5" width="15" height="15" rx="1"/><path d="M8 0.5V15.5M0.5 8H15.5"/><path d="M2.4 4.3H5.8M4.1 2.6V6M10.2 4.3H13.6M2.9 10.3L5.5 12.9M5.5 10.3L2.9 12.9M10.2 10.6H13.6M10.2 12.6H13.6" stroke-width="0.9"/></svg>
<div class="inp" style="left:1105px;top:625px;width:100px;height:32px"></div>
<svg style="left:1184px;top:633px" width="16" height="16" viewBox="0 0 16 16" fill="none" stroke="#b2b2b2" stroke-width="1"><rect x="0.5" y="0.5" width="15" height="15" rx="1"/><path d="M8 0.5V15.5M0.5 8H15.5"/><path d="M2.4 4.3H5.8M4.1 2.6V6M10.2 4.3H13.6M2.9 10.3L5.5 12.9M5.5 10.3L2.9 12.9M10.2 10.6H13.6M10.2 12.6H13.6" stroke-width="0.9"/></svg>
<div class="inp" style="left:1224px;top:625px;width:100px;height:32px"></div>
<svg style="left:1303px;top:633px" width="16" height="16" viewBox="0 0 16 16" fill="none" stroke="#b2b2b2" stroke-width="1"><rect x="0.5" y="0.5" width="15" height="15" rx="1"/><path d="M8 0.5V15.5M0.5 8H15.5"/><path d="M2.4 4.3H5.8M4.1 2.6V6M10.2 4.3H13.6M2.9 10.3L5.5 12.9M5.5 10.3L2.9 12.9M10.2 10.6H13.6M10.2 12.6H13.6" stroke-width="0.9"/></svg>
<svg style="left:213px;top:681.5px" width="12" height="12" viewBox="0 0 12 12"><path d="M6 0.5V11.5M0.5 6H11.5" stroke="#333" stroke-width="1.3" fill="none"/></svg>
<svg style="left:234px;top:681.5px" width="12" height="12" viewBox="0 0 12 12"><path d="M0.5 6H11.5" stroke="#333" stroke-width="1.3" fill="none"/></svg>
<div class="num" style="left:252px;top:679px">2</div>
<div class="inp ph" style="left:301px;top:672px;width:169px;height:32px">物品编号</div>
<div class="inp ph" style="left:489px;top:672px;width:180px;height:32px">物品名称</div>
<svg style="left:648px;top:685.5px" width="17" height="4" viewBox="0 0 17 4" fill="#1a73e8"><rect x="0" y="1" width="2.6" height="2.2" rx=".6"/><rect x="6.6" y="1" width="2.6" height="2.2" rx=".6"/><rect x="13.2" y="1" width="2.6" height="2.2" rx=".6"/></svg>
<div class="inp" style="left:688px;top:672px;width:180px;height:32px"></div>
<div class="inp" style="left:887px;top:672px;width:80px;height:32px"></div>
<svg style="left:948px;top:685px" width="12" height="7" viewBox="0 0 12 7"><path d="M0.7 0.7 L6.0 6.1 L11.3 0.7" fill="none" stroke="#8c8c8c" stroke-width="1.3" stroke-linecap="round" stroke-linejoin="round"/></svg>
<div class="inp" style="left:986px;top:672px;width:100px;height:32px"></div>
<svg style="left:1065px;top:680px" width="16" height="16" viewBox="0 0 16 16" fill="none" stroke="#b2b2b2" stroke-width="1"><rect x="0.5" y="0.5" width="15" height="15" rx="1"/><path d="M8 0.5V15.5M0.5 8H15.5"/><path d="M2.4 4.3H5.8M4.1 2.6V6M10.2 4.3H13.6M2.9 10.3L5.5 12.9M5.5 10.3L2.9 12.9M10.2 10.6H13.6M10.2 12.6H13.6" stroke-width="0.9"/></svg>
<div class="inp" style="left:1105px;top:672px;width:100px;height:32px"></div>
<svg style="left:1184px;top:680px" width="16" height="16" viewBox="0 0 16 16" fill="none" stroke="#b2b2b2" stroke-width="1"><rect x="0.5" y="0.5" width="15" height="15" rx="1"/><path d="M8 0.5V15.5M0.5 8H15.5"/><path d="M2.4 4.3H5.8M4.1 2.6V6M10.2 4.3H13.6M2.9 10.3L5.5 12.9M5.5 10.3L2.9 12.9M10.2 10.6H13.6M10.2 12.6H13.6" stroke-width="0.9"/></svg>
<div class="inp" style="left:1224px;top:672px;width:100px;height:32px"></div>
<svg style="left:1303px;top:680px" width="16" height="16" viewBox="0 0 16 16" fill="none" stroke="#b2b2b2" stroke-width="1"><rect x="0.5" y="0.5" width="15" height="15" rx="1"/><path d="M8 0.5V15.5M0.5 8H15.5"/><path d="M2.4 4.3H5.8M4.1 2.6V6M10.2 4.3H13.6M2.9 10.3L5.5 12.9M5.5 10.3L2.9 12.9M10.2 10.6H13.6M10.2 12.6H13.6" stroke-width="0.9"/></svg>
<svg style="left:213px;top:728.5px" width="12" height="12" viewBox="0 0 12 12"><path d="M6 0.5V11.5M0.5 6H11.5" stroke="#333" stroke-width="1.3" fill="none"/></svg>
<svg style="left:234px;top:728.5px" width="12" height="12" viewBox="0 0 12 12"><path d="M0.5 6H11.5" stroke="#333" stroke-width="1.3" fill="none"/></svg>
<div class="num" style="left:252px;top:726px">3</div>
<div class="inp ph" style="left:301px;top:719px;width:169px;height:32px">物品编号</div>
<div class="inp ph" style="left:489px;top:719px;width:180px;height:32px">物品名称</div>
<svg style="left:648px;top:732.5px" width="17" height="4" viewBox="0 0 17 4" fill="#1a73e8"><rect x="0" y="1" width="2.6" height="2.2" rx=".6"/><rect x="6.6" y="1" width="2.6" height="2.2" rx=".6"/><rect x="13.2" y="1" width="2.6" height="2.2" rx=".6"/></svg>
<div class="inp" style="left:688px;top:719px;width:180px;height:32px"></div>
<div class="inp" style="left:887px;top:719px;width:80px;height:32px"></div>
<svg style="left:948px;top:732px" width="12" height="7" viewBox="0 0 12 7"><path d="M0.7 0.7 L6.0 6.1 L11.3 0.7" fill="none" stroke="#8c8c8c" stroke-width="1.3" stroke-linecap="round" stroke-linejoin="round"/></svg>
<div class="inp" style="left:986px;top:719px;width:100px;height:32px"></div>
<svg style="left:1065px;top:727px" width="16" height="16" viewBox="0 0 16 16" fill="none" stroke="#b2b2b2" stroke-width="1"><rect x="0.5" y="0.5" width="15" height="15" rx="1"/><path d="M8 0.5V15.5M0.5 8H15.5"/><path d="M2.4 4.3H5.8M4.1 2.6V6M10.2 4.3H13.6M2.9 10.3L5.5 12.9M5.5 10.3L2.9 12.9M10.2 10.6H13.6M10.2 12.6H13.6" stroke-width="0.9"/></svg>
<div class="inp" style="left:1105px;top:719px;width:100px;height:32px"></div>
<svg style="left:1184px;top:727px" width="16" height="16" viewBox="0 0 16 16" fill="none" stroke="#b2b2b2" stroke-width="1"><rect x="0.5" y="0.5" width="15" height="15" rx="1"/><path d="M8 0.5V15.5M0.5 8H15.5"/><path d="M2.4 4.3H5.8M4.1 2.6V6M10.2 4.3H13.6M2.9 10.3L5.5 12.9M5.5 10.3L2.9 12.9M10.2 10.6H13.6M10.2 12.6H13.6" stroke-width="0.9"/></svg>
<div class="inp" style="left:1224px;top:719px;width:100px;height:32px"></div>
<svg style="left:1303px;top:727px" width="16" height="16" viewBox="0 0 16 16" fill="none" stroke="#b2b2b2" stroke-width="1"><rect x="0.5" y="0.5" width="15" height="15" rx="1"/><path d="M8 0.5V15.5M0.5 8H15.5"/><path d="M2.4 4.3H5.8M4.1 2.6V6M10.2 4.3H13.6M2.9 10.3L5.5 12.9M5.5 10.3L2.9 12.9M10.2 10.6H13.6M10.2 12.6H13.6" stroke-width="0.9"/></svg>
<svg style="left:1150px;top:770px;filter:blur(1.1px)" width="50" height="20" viewBox="0 0 50 20"><rect x="0" y="0" width="10" height="10" fill="#fdecec"/><rect x="10" y="0" width="10" height="10" fill="#fbe0e0"/><rect x="20" y="0" width="10" height="10" fill="#fce6e6"/><rect x="30" y="0" width="10" height="10" fill="#fbe2e2"/><rect x="40" y="0" width="10" height="10" fill="#fef4f4"/><rect x="0" y="10" width="10" height="10" fill="#fce4e4"/><rect x="10" y="10" width="10" height="10" fill="#f6bcbc"/><rect x="20" y="10" width="10" height="10" fill="#f7c2c2"/><rect x="30" y="10" width="10" height="10" fill="#f7c0c0"/><rect x="40" y="10" width="10" height="10" fill="#fdeaea"/></svg>
<svg style="left:1260px;top:770px;filter:blur(1.1px)" width="50" height="20" viewBox="0 0 50 20"><rect x="0" y="0" width="10" height="10" fill="#fef2f2"/><rect x="10" y="0" width="10" height="10" fill="#fce8e8"/><rect x="20" y="0" width="10" height="10" fill="#fce6e6"/><rect x="30" y="0" width="10" height="10" fill="#fce8e8"/><rect x="40" y="0" width="10" height="10" fill="#fdeeee"/><rect x="0" y="10" width="10" height="10" fill="#fdecec"/><rect x="10" y="10" width="10" height="10" fill="#f7c0c0"/><rect x="20" y="10" width="10" height="10" fill="#f7c2c2"/><rect x="30" y="10" width="10" height="10" fill="#f8c8c8"/><rect x="40" y="10" width="10" height="10" fill="#fbdcdc"/></svg>
<div class="ft" style="left:1104px;top:773px">总数量:</div>
<div class="ft" style="left:1201px;top:773px">原料成本:</div>
<div class="ft" style="left:1311px;top:773px">元</div>
<svg style="left:690px;top:630px;filter:blur(0.9px)" width="170" height="20" viewBox="0 0 170 20"><rect x="0" y="0" width="10" height="10" fill="#f8f8f8"/><rect x="10" y="0" width="10" height="10" fill="#e9e9e9"/><rect x="20" y="0" width="10" height="10" fill="#e6e6e6"/><rect x="30" y="0" width="10" height="10" fill="#e4e4e4"/><rect x="40" y="0" width="10" height="10" fill="#e2e2e2"/><rect x="50" y="0" width="10" height="10" fill="#e7e7e7"/><rect x="60" y="0" width="10" height="10" fill="#e5e5e5"/><rect x="70" y="0" width="10" height="10" fill="#e3e3e3"/><rect x="80" y="0" width="10" height="10" fill="#e6e6e6"/><rect x="90" y="0" width="10" height="10" fill="#e4e4e4"/><rect x="100" y="0" width="10" height="10" fill="#e6e6e6"/><rect x="110" y="0" width="10" height="10" fill="#e8e8e8"/><rect x="120" y="0" width="10" height="10" fill="#e2e2e2"/><rect x="130" y="0" width="10" height="10" fill="#e5e5e5"/><rect x="140" y="0" width="10" height="10" fill="#e3e3e3"/><rect x="150" y="0" width="10" height="10" fill="#e1e1e1"/><rect x="160" y="0" width="10" height="10" fill="#f6f6f6"/><rect x="0" y="10" width="10" height="10" fill="#f6f6f6"/><rect x="10" y="10" width="10" height="10" fill="#dcdcdc"/><rect x="20" y="10" width="10" height="10" fill="#d6d6d6"/><rect x="30" y="10" width="10" height="10" fill="#d2d2d2"/><rect x="40" y="10" width="10" height="10" fill="#d4d4d4"/><rect x="50" y="10" width="10" height="10" fill="#dedede"/><rect x="60" y="10" width="10" height="10" fill="#d3d3d3"/><rect x="70" y="10" width="10" height="10" fill="#d1d1d1"/><rect x="80" y="10" width="10" height="10" fill="#d5d5d5"/><rect x="90" y="10" width="10" height="10" fill="#dadada"/><rect x="100" y="10" width="10" height="10" fill="#dddddd"/><rect x="110" y="10" width="10" height="10" fill="#c9c9c9"/><rect x="120" y="10" width="10" height="10" fill="#cfcfcf"/><rect x="130" y="10" width="10" height="10" fill="#d8d8d8"/><rect x="140" y="10" width="10" height="10" fill="#d6d6d6"/><rect x="150" y="10" width="10" height="10" fill="#d9d9d9"/><rect x="160" y="10" width="10" height="10" fill="#f3f3f3"/></svg>
<div class="lbl" style="left:206px;top:843px">项目:</div>
<div class="inp" style="left:316px;top:836px;width:250px;height:32px">北京市 海淀区</div>
<svg style="left:547px;top:849px" width="12" height="7" viewBox="0 0 12 7"><path d="M0.7 0.7 L6.0 6.1 L11.3 0.7" fill="none" stroke="#8c8c8c" stroke-width="1.3" stroke-linecap="round" stroke-linejoin="round"/></svg>
<div class="lbl" style="left:576px;top:843px">经办人:</div>
<div class="inp" style="left:686px;top:836px;width:250px;height:32px">电脑组装项目</div>
<svg style="left:917px;top:849px" width="12" height="7" viewBox="0 0 12 7"><path d="M0.7 0.7 L6.0 6.1 L11.3 0.7" fill="none" stroke="#8c8c8c" stroke-width="1.3" stroke-linecap="round" stroke-linejoin="round"/></svg>
<div class="lbl" style="left:946px;top:843px">提醒日期:</div>
<div class="inp" style="left:1056px;top:836px;width:250px;height:32px">支付宝</div>
<svg style="left:1287px;top:846px" width="12" height="13" viewBox="0 0 12 13" fill="none" stroke="#a3a3a3" stroke-width="1"><rect x="0.5" y="1.9" width="11" height="10.2" rx="1"/><path d="M0.5 5H11.5M3.4 0.3V3.2M8.6 0.3V3.2"/></svg>
<div class="lbl" style="left:206px;top:895px">备注:</div>
<div class="inp ph" style="left:316px;top:888px;width:990px;height:110px">请输入暗文</div>
<div class="lbl" style="left:206px;top:1025px">上传附件:</div>
<div class="inp" style="left:316px;top:1018px;width:110px;height:32px;padding-left:35px;color:#222">添加附件</div>
<svg style="left:332px;top:1027px" width="16" height="15" viewBox="0 0 16 15" fill="#222"><path d="M0.6 0.4H11.4L7.6 5.4V13.6H5.2L4.4 12.6V5.4Z"/><rect x="9.6" y="9.5" width="6.2" height="1.4"/><rect x="9.6" y="12.3" width="6.2" height="1.4"/></svg>
<div class="abs" style="left:190px;top:1064px;width:1160px;height:9px;background:linear-gradient(to bottom,rgba(0,0,0,0),rgba(0,0,0,.035))"></div>
<div class="abs" style="left:190px;top:1073px;width:1160px;height:56px;background:#fff"></div>
<div class="abs" style="left:421px;top:1045px;width:276px;height:32px;background:#fff7e8;border:1px solid #fbd9a0;border-radius:3px;color:#f5a31f;font-size:13px;line-height:32px;padding-left:9px;white-space:nowrap">将委外加工单中的成品直接做同步入库操作</div>
<svg style="left:672px;top:1076px" width="16" height="9" viewBox="0 0 16 9"><path d="M0.5 0 L8 8 L15.5 0" fill="#fff7e8" stroke="#fbd9a0" stroke-width="1"/><rect x="1" y="-1" width="14" height="1.6" fill="#fff7e8"/></svg>
<svg style="left:683px;top:1050px" width="8" height="8" viewBox="0 0 8 8"><path d="M0.5 0.5L7.5 7.5M7.5 0.5L0.5 7.5" stroke="#999" stroke-width="1" fill="none"/></svg>
<div class="abs" style="left:592px;top:1095px;width:12px;height:12px;border:1px solid #8a8a8a;border-radius:1px;background:#fff"></div>
<div class="ft" style="left:611px;top:1092px">成品入库</div>
<div class="abs" style="left:674px;top:1094px;width:14px;height:14px;border:1.3px solid #f47a3d;border-radius:50%;color:#f47a3d;font-size:10px;line-height:11.5px;text-align:center;font-weight:bold">?</div>
<div class="btn-g" style="left:709px;top:1085px;width:56px;height:32px;line-height:34px">确定</div>
<div class="btn-w" style="left:775px;top:1085px;width:56px;height:32px;line-height:32px">取消</div>
<!-- /MAIN -->
</body>
</html>
